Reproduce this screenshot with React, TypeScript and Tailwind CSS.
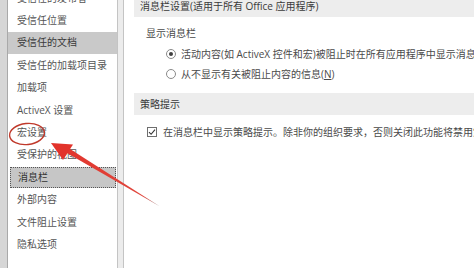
const font = { fontFamily: '"Open Sans", "Noto Sans CJK SC", sans-serif' };

const navItems = [
  '受信任的发布者',
  '受信任位置',
  '受信任的文档',
  '受信任的加载项目录',
  '加载项',
  'ActiveX 设置',
  '宏设置',
  '受保护的视图',
  '消息栏',
  '外部内容',
  '文件阻止设置',
  '隐私选项',
];

function NavItem({ label }: { label: string }) {
  if (label === '受信任的文档') {
    return (
      <div className="h-[22.4px] flex items-center pl-[9px] bg-[#c9c9c9] text-[#3a3a3a]">{label}</div>
    );
  }
  if (label === '消息栏') {
    return (
      <div className="h-[22.4px] p-[1px] pl-[2px]">
        <div className="h-full flex items-center pl-[7px] bg-[#c6c6c6] border border-dotted border-[#555] text-[#333]">
          {label}
        </div>
      </div>
    );
  }
  return <div className="h-[22.4px] flex items-center pl-[9px] text-[#555]">{label}</div>;
}

function Radio({ checked }: { checked?: boolean }) {
  return (
    <span className="w-[10px] h-[10px] rounded-full border border-[#8a8a8a] bg-white flex items-center justify-center shrink-0">
      {checked && <span className="w-[4px] h-[4px] rounded-full bg-[#404040]" />}
    </span>
  );
}

export default function App() {
  return (
    <div className="relative w-[474px] h-[268px] overflow-hidden bg-white flex text-[10px]" style={font}>
      <div className="w-[8px] bg-[#d6d6d6] border-r border-[#a9a9a9] shrink-0" />
      <div className="w-[109px] shrink-0 bg-white">
        <div className="-mt-[13px]">
          {navItems.map((l) => (
            <NavItem key={l} label={l} />
          ))}
        </div>
      </div>
      <div className="w-[7px] shrink-0 bg-[#ececec] border-x border-[#c4c4c4]" />
      <div className="w-[10px] shrink-0" />
      <div className="flex-1 flex flex-col text-[#4a4a4a]">
        <div className="-mt-[5px] h-[22px] bg-[#ededed] flex items-center pl-[6px] text-[#3a3a3a]">
          消息栏设置(适用于所有 Office 应用程序)
        </div>
        <div className="h-[21px] mt-[6px] flex items-center pl-[12px]">显示消息栏</div>
        <div className="h-[20px] flex items-center pl-[32px] gap-[5px] whitespace-nowrap">
          <Radio checked />
          <span>活动内容(如 ActiveX 控件和宏)被阻止时在所有应用程序中显示消息栏(S)</span>
        </div>
        <div className="h-[20px] flex items-center pl-[32px] gap-[5px] whitespace-nowrap">
          <Radio />
          <span>
            从不显示有关被阻止内容的信息(<span className="underline">N</span>)
          </span>
        </div>
        <div className="mt-[9px] h-[22px] bg-[#ededed] flex items-center pl-[6px] text-[#3a3a3a]">策略提示</div>
        <div className="h-[34px] flex items-center pl-[13px] gap-[6px] whitespace-nowrap">
          <span className="w-[10px] h-[10px] border border-[#6e6e6e] bg-white flex items-center justify-center shrink-0">
            <svg width="8" height="8" viewBox="0 0 8 8">
              <path d="M1 4.2 L3.1 6.3 L7 1.6" fill="none" stroke="#333" strokeWidth="1.1" />
            </svg>
          </span>
          <span>在消息栏中显示策略提示。除非你的组织要求，否则关闭此功能将禁用策略提示。</span>
        </div>
      </div>
      <svg className="absolute inset-0 pointer-events-none" width="474" height="268">
        <defs>
          <linearGradient id="ar" x1="160" y1="206" x2="50" y2="143" gradientUnits="userSpaceOnUse">
            <stop offset="0" stopColor="#8a6a6a" />
            <stop offset="0.15" stopColor="#e0463c" />
            <stop offset="1" stopColor="#e2332b" />
          </linearGradient>
        </defs>
        <ellipse cx="27" cy="134" rx="17.5" ry="10.5" fill="none" stroke="#c0392b" strokeWidth="1.4" transform="rotate(-6 27 134)" />
        <path d="M160 206.5 L66 152.5 L68.5 148 Z" fill="url(#ar)" />
        <path d="M51 143 L73 144.5 L63 160 Z" fill="#e2332b" />
      </svg>
    </div>
  );
}
